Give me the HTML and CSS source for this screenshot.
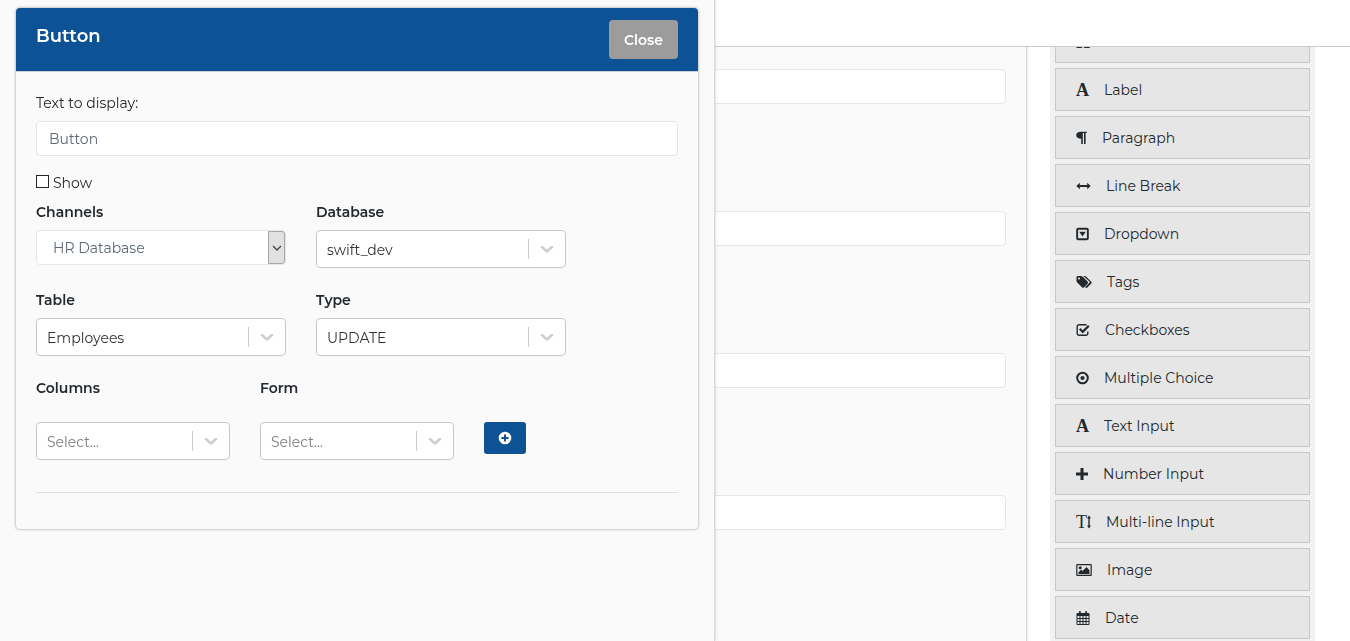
FILE: index.html
```html
<!DOCTYPE html>
<html lang="en">
<head>
<meta charset="utf-8">
<title>Form builder</title>
<link rel="stylesheet" href="styles.css">
</head>
<body>
<header class="topbar"></header>
<div class="workspace">
  <main class="canvas">
    <input class="field" type="text" aria-label="Field 1">
    <input class="field" type="text" aria-label="Field 2">
    <input class="field" type="text" aria-label="Field 3">
    <input class="field" type="text" aria-label="Field 4">
  </main>
  <ul class="palette">
    <li class="tool"><span class="glyph" aria-hidden="true">H</span>Header</li>
    <li class="tool"><span class="glyph" aria-hidden="true">A</span>Label</li>
    <li class="tool"><svg class="icon" width="11" height="14" viewBox="0 0 11 14"><path d="M10.800.800v1.300H9.600V13H8V2.100H6.800V13H5.200V7.800C2.200 7.700.200 6.300.200 4.200.200 2 2 .800 4.500.800z"/></svg>Paragraph</li>
    <li class="tool"><svg class="icon" width="15" height="14" viewBox="0 0 15 14"><path d="M.300 7 3.800 3.700V6h7.400V3.700L14.700 7l-3.500 3.300V8H3.800v2.300z"/></svg>Line Break</li>
    <li class="tool"><svg class="icon" width="13" height="14" viewBox="0 0 13 14"><path fill-rule="evenodd" d="M2.200.800h8.600A2 2 0 0 1 12.800 2.800v8.400a2 2 0 0 1-2 2H2.200a2 2 0 0 1-2-2V2.800a2 2 0 0 1 2-2zM2.100 2.700v8.600h8.800V2.700zM3.200 4.700h6.600L6.500 9.500z"/></svg>Dropdown</li>
    <li class="tool"><svg class="icon" width="16" height="14" viewBox="0 0 16 14"><path fill-rule="evenodd" d="M.500 2.200Q.500 1 1.700 1H5q1 0 1.800.8l5 5q.8.900 0 1.700l-3.900 3.900q-.9.800-1.700 0l-5-5Q.500 6.700.500 5.700zM3 2.400a1.100 1.100 0 1 0 0 2.200 1.100 1.100 0 0 0 0-2.200z"/><path d="M7.300 1h1.200q1 0 1.800.8l5 5q.8.900 0 1.700l-4 4q-.9.800-1.900 0l-.3-.4 4.400-4.400q.5-.6 0-1.200z"/></svg>Tags</li>
    <li class="tool"><svg class="icon" width="14" height="14" viewBox="0 0 14 14"><path class="line" d="M10.500 1.700H3A1.800 1.800 0 0 0 1.200 3.500v7A1.800 1.800 0 0 0 3 12.300h7a1.800 1.800 0 0 0 1.800-1.800V8.500"/><path d="M3 6.500 4.500 5l2.200 2.200L12 2l1.600 1.600L6.700 10.400z"/></svg>Checkboxes</li>
    <li class="tool"><svg class="icon" width="13" height="14" viewBox="0 0 13 14"><circle class="ring" cx="6.500" cy="7" r="5.300"/><circle cx="6.500" cy="7" r="2.100"/></svg>Multiple Choice</li>
    <li class="tool"><span class="glyph" aria-hidden="true">A</span>Text Input</li>
    <li class="tool"><svg class="icon" width="12" height="14" viewBox="0 0 12 14"><path d="M4.500 1h3v4.500H12v3H7.500V13h-3V8.500H0v-3h4.500z"/></svg>Number Input</li>
    <li class="tool"><span class="glyph glyph-thin" aria-hidden="true">T<svg class="icon" width="4" height="14" viewBox="0 0 4 14"><path d="M2 .600 4 3.500H2.700v7H4L2 13.400 0 10.500h1.300v-7H0z"/></svg></span>Multi-line Input</li>
    <li class="tool"><svg class="icon" width="16" height="14" viewBox="0 0 16 14"><path fill-rule="evenodd" d="M1.200 1h13.600a1 1 0 0 1 1 1v10a1 1 0 0 1-1 1H1.200a1 1 0 0 1-1-1V2a1 1 0 0 1 1-1zM1.400 2.200v9.600h13.200V2.200z"/><circle cx="4.200" cy="4.700" r="1.500"/><path d="M2.500 11V9.200L5.200 6.500l1.400 1.400 3.900-3.900 3 3.200V11z"/></svg>Image</li>
    <li class="tool"><svg class="icon" width="14" height="14" viewBox="0 0 14 14"><path fill-rule="evenodd" d="M1.500 2H3V.800Q3 0 3.900 0t.9.800V2h4.400V.800q0-.8.900-.8t.9.800V2h1.500q1 0 1 1v10q0 1-1 1h-11q-1 0-1-1V3q0-1 1-1zM1.500 5v2h2V5zm3 0v2h2V5zm3 0v2h2V5zm3 0v2h2V5zm-9 3v2h2V8zm3 0v2h2V8zm3 0v2h2V8zm3 0v2h2V8zm-9 3v2h2v-2zm3 0v2h2v-2zm3 0v2h2v-2zm3 0v2h2v-2z"/></svg>Date</li>
  </ul>
</div>

<aside class="drawer">
  <section class="card">
    <header class="card-head">
      <h1 class="title">Button</h1>
      <button class="close" type="button">Close</button>
    </header>
    <form class="card-body">
      <label class="label" for="display">Text to display:</label>
      <input class="field" id="display" type="text" value="Button">
      <div class="check-row">
        <input class="check" id="show" type="checkbox"><label for="show">Show</label>
      </div>
      <div class="grid">
        <div class="half">
          <label class="label strong" for="channels">Channels</label>
          <div class="picker">
            <select class="field native" id="channels"><option>HR Database</option></select>
            <span class="native-arrow"><svg width="10" height="6" viewBox="0 0 10 6"><path d="M1 1l4 4 4-4"/></svg></span>
          </div>
        </div>
        <div class="half">
          <label class="label strong" for="database">Database</label>
          <div class="picker">
            <select class="select" id="database"><option>swift_dev</option></select>
            <span class="arrow"><svg width="14" height="8" viewBox="0 0 14 8"><path d="M2 2l5 4.500 5-4.500"/></svg></span>
          </div>
        </div>
        <div class="half">
          <label class="label strong" for="table">Table</label>
          <div class="picker">
            <select class="select" id="table"><option>Employees</option></select>
            <span class="arrow"><svg width="14" height="8" viewBox="0 0 14 8"><path d="M2 2l5 4.500 5-4.500"/></svg></span>
          </div>
        </div>
        <div class="half">
          <label class="label strong" for="type">Type</label>
          <div class="picker">
            <select class="select" id="type"><option>UPDATE</option></select>
            <span class="arrow"><svg width="14" height="8" viewBox="0 0 14 8"><path d="M2 2l5 4.500 5-4.500"/></svg></span>
          </div>
        </div>
      </div>
      <div class="grid mapping">
        <div class="third">
          <label class="label strong" for="columns">Columns</label>
          <div class="picker">
            <select class="select empty" id="columns"><option>Select...</option></select>
            <span class="arrow"><svg width="14" height="8" viewBox="0 0 14 8"><path d="M2 2l5 4.500 5-4.500"/></svg></span>
          </div>
        </div>
        <div class="third">
          <label class="label strong" for="form">Form</label>
          <div class="picker">
            <select class="select empty" id="form"><option>Select...</option></select>
            <span class="arrow"><svg width="14" height="8" viewBox="0 0 14 8"><path d="M2 2l5 4.500 5-4.500"/></svg></span>
          </div>
        </div>
        <div class="third add-cell">
          <button class="add" type="button" aria-label="Add mapping"><svg width="14" height="14" viewBox="0 0 14 14"><path fill-rule="evenodd" d="M7 .700a6.300 6.300 0 1 1 0 12.600A6.300 6.300 0 0 1 7 .700zM6 3.500V6H3.500v2H6v2.500h2V8h2.500V6H8V3.500z"/></svg></button>
        </div>
      </div>
      <hr class="rule">
    </form>
  </section>
</aside>
</body>
</html>
```

FILE: styles.css
```css
* { box-sizing: border-box; }

body {
  margin: 0;
  height: 100vh;
  overflow: hidden;
  background: #fff;
  color: #23282c;
  font: 14px/22px Montserrat, Inter, sans-serif;
}

/* Bar over the scrolled workspace */
.topbar {
  position: fixed;
  top: 0;
  left: 0;
  right: 0;
  z-index: 1;
  height: 47px;
  background: #fff;
  border-bottom: 1px solid #c8ced3;
}

.workspace {
  display: grid;
  grid-template-columns: 1fr 265px;
  gap: 24px;
  height: 100vh;
  padding-right: 35px;
  overflow: hidden;
}

.canvas {
  display: flex;
  flex-direction: column;
  gap: 107px;
  padding: 69px 20px 0;
  background: #fafafa;
  box-shadow: 0 0 3px rgba(0, 0, 0, 0.4);
}

.palette {
  display: flex;
  flex-direction: column;
  gap: 5px;
  margin: 0;
  padding: 20px 5px 5px;
  list-style: none;
  background: #f1f1f1;
}

.tool {
  display: flex;
  flex: none;
  align-items: center;
  gap: 15px;
  height: 43px;
  padding: 0 20px;
  border: 1px solid #c8c8c8;
  background: #e6e6e6;
}

.icon { fill: #23282c; }
.icon .line, .icon .ring { fill: none; stroke: #23282c; }
.icon .line { stroke-width: 1.4; }
.icon .ring { stroke-width: 2; }

.glyph {
  display: flex;
  align-items: center;
  font: bold 18px/22px "Liberation Serif", serif;
}
.glyph-thin { font-weight: normal; }

.drawer {
  position: fixed;
  top: 0;
  bottom: 0;
  left: 0;
  z-index: 2;
  width: min(53%, 715px);
  padding: 8px 16px;
  background: #fafafa;
  border-right: 1px solid #d8d8d8;
  box-shadow: 0 0 3px rgba(0, 0, 0, 0.2);
}

.card {
  border-radius: 4px;
  background: #fafafa;
  box-shadow: 0 0 3px rgba(0, 0, 0, 0.4);
}

.card-head {
  display: flex;
  align-items: flex-start;
  justify-content: space-between;
  padding: 12px 20px;
  border-bottom: 1px solid #c8ced3;
  border-radius: 4px 4px 0 0;
  background: #0c5294;
  color: #fff;
}

.title {
  margin: 5px 0 0;
  font-size: 18px;
  line-height: 22px;
  font-weight: 600;
}

.close {
  height: 39px;
  padding: 0 15px;
  border: 0;
  border-radius: 4px;
  background: #9c9c9c;
  color: #fff;
  font: inherit;
  font-weight: 600;
}

.card-body { padding: 20px 20px 36px; }

.label {
  display: block;
  margin-bottom: 7px;
}
.strong { font-weight: 600; }

.field {
  display: block;
  width: 100%;
  height: 35px;
  padding: 0 12px;
  border: 1px solid #e4e7ea;
  border-radius: 4px;
  background: #fff;
  color: #5c6873;
  font: inherit;
}

.check-row {
  display: flex;
  align-items: center;
  gap: 4px;
  margin: 16px 0 7px;
}

.check {
  appearance: none;
  width: 13px;
  height: 13px;
  margin: 0 0 3px;
  border: 1px solid #23282c;
  background: #fff;
}
.check:checked { background: #0c5294; }

.grid {
  display: grid;
  grid-template-columns: repeat(12, 1fr);
  gap: 21px 30px;
}
.half { grid-column: span 5; }
.half:nth-child(odd) { grid-column: 1 / span 5; }
.third { grid-column: span 4; }

.picker { display: grid; align-items: center; }
.picker > * { grid-area: 1 / 1; }

.select {
  appearance: none;
  width: 100%;
  height: 38px;
  padding: 1px 10px 0;
  border: 1px solid #c8c8c8;
  border-radius: 4px;
  background: #fff;
  color: #333;
  font: inherit;
}
.empty { color: #808080; }

.arrow {
  display: flex;
  align-items: center;
  justify-self: end;
  height: 20px;
  padding: 0 12px 0 11px;
  border-left: 1px solid #ccc;
  pointer-events: none;
}
.arrow path { fill: none; stroke: #ccc; stroke-width: 2.4; stroke-linecap: round; }

.native { appearance: none; padding: 0 16px; }
.native-arrow {
  display: flex;
  align-items: center;
  justify-content: center;
  justify-self: end;
  width: 17px;
  height: 33px;
  margin-right: 1px;
  border: 1px solid #a6a6a6;
  border-radius: 0 3px 3px 0;
  background: #e1e1e1;
  pointer-events: none;
}
.native-arrow path { fill: none; stroke: #444; stroke-width: 1.3; }

.mapping { margin-top: 21px; }
.mapping .label { margin-bottom: 23px; }
.add-cell { padding-top: 45px; }

.add {
  display: flex;
  align-items: center;
  justify-content: center;
  width: 42px;
  height: 32px;
  border: 0;
  border-radius: 3px;
  background: #0c5294;
}
.add path { fill: #fff; }

.rule {
  margin: 32px 0 0;
  border: 0;
  border-top: 1px solid #dedfe0;
}
```
